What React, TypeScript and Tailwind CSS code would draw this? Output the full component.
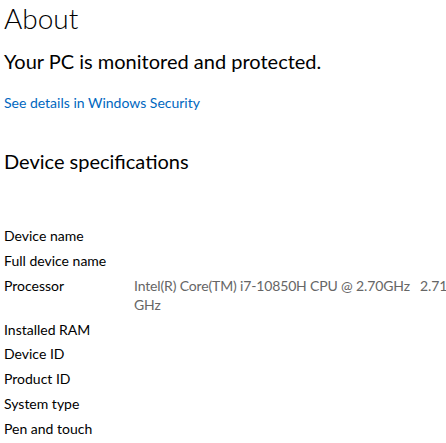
const specs: { label: string; value?: string[] }[] = [
  { label: "Device name" },
  { label: "Full device name" },
  {
    label: "Processor",
    value: ["Intel(R) Core(TM) i7-10850H CPU @ 2.70GHz\u00a0\u00a0\u00a02.71", "GHz"],
  },
  { label: "Installed RAM" },
  { label: "Device ID" },
  { label: "Product ID" },
  { label: "System type" },
  { label: "Pen and touch" },
];

export default function App() {
  return (
    <div className="w-[446px] h-[443px] overflow-hidden bg-white pl-[4px] text-black font-['Segoe_UI','Lato',sans-serif]">
      <h1 className="text-[28px] font-light leading-[36px]">About</h1>
      <p className="mt-[11px] text-[20px] leading-[28px]">Your PC is monitored and protected.</p>
      <a className="mt-[18px] block text-[14px] leading-[20px] text-[#0067c0]">
        See details in Windows Security
      </a>
      <h2 className="mt-[34px] text-[20px] leading-[28px]">Device specifications</h2>

      <div className="mt-[48px]">
        {specs.map((s) => (
          <div key={s.label} className="grid grid-cols-[130px_1fr] py-[2.95px] text-[14px] leading-[19px]">
            <div>{s.label}</div>
            <div className="text-[#666666] tracking-[-0.15px]">
              {s.value?.map((line) => (
                <div key={line} className="whitespace-nowrap">
                  {line}
                </div>
              ))}
            </div>
          </div>
        ))}
      </div>
    </div>
  );
}
